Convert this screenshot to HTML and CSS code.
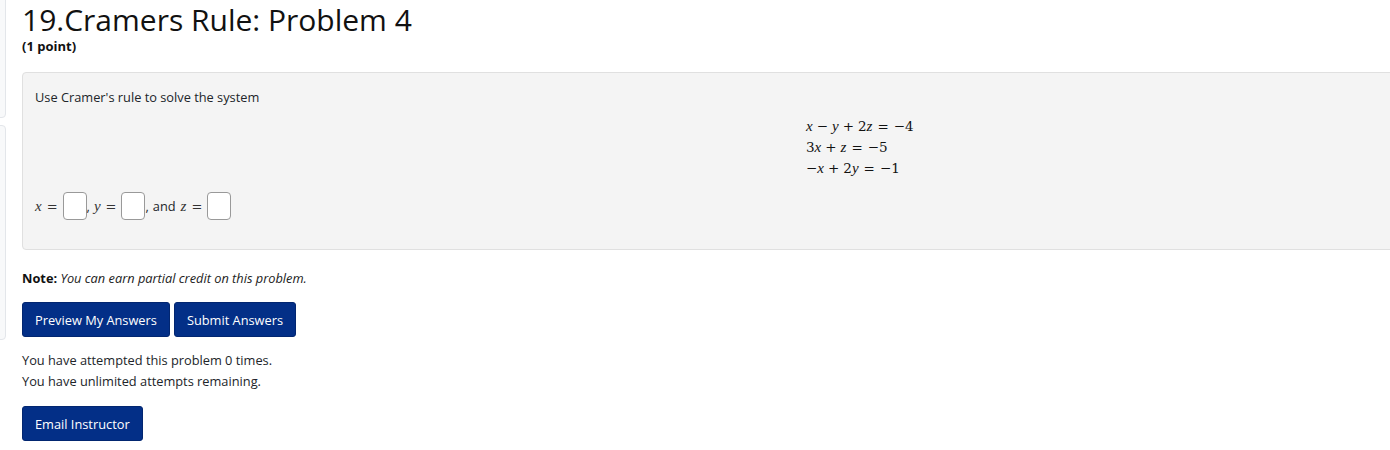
FILE: index.html
```html
<!DOCTYPE html>
<html lang="en">
<head>
<meta charset="utf-8">
<title>Cramers Rule: Problem 4</title>
<link rel="stylesheet" href="styles.css">
</head>
<body>
<div class="page">
  <aside class="side">
    <div class="side-card side-top"></div>
    <div class="side-card side-bottom"></div>
  </aside>
  <main class="main">
    <h1 class="title">19.Cramers Rule: Problem 4</h1>
    <div class="points">(1 point)</div>
    <div class="problem">
      <p class="intro">Use Cramer's rule to solve the system</p>
      <div class="system">
        <div class="eq"><i>x</i><span class="op">&minus;</span><i>y</i><span class="op">+</span>2<i>z</i><span class="rel">=</span>&minus;4</div>
        <div class="eq">3<i>x</i><span class="op">+</span><i>z</i><span class="rel">=</span>&minus;5</div>
        <div class="eq">&minus;<i>x</i><span class="op">+</span>2<i>y</i><span class="rel">=</span>&minus;1</div>
      </div>
      <div class="answers">
        <span class="m"><i>x</i><span class="rel">=</span></span><input class="ans" type="text" aria-label="x"><span class="sep">,</span>
        <span class="m"><i>y</i><span class="rel">=</span></span><input class="ans" type="text" aria-label="y"><span class="sep">,</span>
        <span class="word">and</span>
        <span class="m"><i>z</i><span class="rel">=</span></span><input class="ans" type="text" aria-label="z">
      </div>
    </div>
    <p class="note"><b>Note:</b> <em>You can earn partial credit on this problem.</em></p>
    <div class="btn-row">
      <button class="btn">Preview My Answers</button>
      <button class="btn">Submit Answers</button>
    </div>
    <p class="attempts">You have attempted this problem 0 times.<br>You have unlimited attempts remaining.</p>
    <button class="btn">Email Instructor</button>
  </main>
</div>
</body>
</html>
```

FILE: styles.css
```css
* { box-sizing: border-box; }
html, body { margin: 0; padding: 0; background: #fff; }
body {
  font-family: "Open Sans", "Noto Sans", "Liberation Sans", sans-serif;
  color: #212529;
  font-size: 12.8px;
  overflow: hidden;
}
.page {
  display: flex;
  width: 1390px;
  height: 450px;
}
.side {
  width: 22px;
  flex: none;
  display: flex;
  flex-direction: column;
  gap: 7px;
  margin-left: -16px;
}
.side-card {
  width: 22px;
  background: #f8f9fa;
  border: 1px solid #e3e6ea;
  border-radius: 4px;
}
.side-top { height: 124px; margin-top: -6px; }
.side-bottom { height: 215px; }
.main {
  flex: 1;
  padding-left: 16px;
  min-width: 0;
}
.title {
  margin: 3px 0 0;
  font-size: 30px;
  font-weight: 500;
  line-height: 34px;
  color: #111;
}
.points {
  font-size: 13px;
  font-weight: 700;
  line-height: 14px;
  margin-top: 2px;
  color: #111;
}
.problem {
  margin-top: 19px;
  width: 1400px;
  height: 178px;
  background: #f4f4f4;
  border: 1px solid #e0e0e0;
  border-radius: 4px;
  padding: 15px 12px 0;
}
.intro {
  margin: 0;
  line-height: 18px;
}
.system {
  margin: 10px 0 0 771px;
  font-family: "DejaVu Serif", "Liberation Serif", serif;
  font-size: 13.5px;
  line-height: 21px;
  color: #111;
}
.system i, .answers i {
  font-family: "Liberation Serif", serif;
  font-size: 15px;
}
.op { margin: 0 4px; }
.rel { margin: 0 5px; }
.answers {
  margin-top: 13px;
  display: flex;
  align-items: center;
}
.m {
  font-family: "DejaVu Serif", "Liberation Serif", serif;
  font-size: 13px;
  color: #333;
}
.ans {
  width: 24px;
  height: 28px;
  border: 1px solid #999;
  border-radius: 4px;
  background: #fff;
  padding: 0;
  margin: 0;
}
.sep { margin-right: 4px; }
.word { margin-right: 5px; }
.note {
  margin: 19px 0 0;
  line-height: 18px;
  color: #111;
}
.note em { color: #222; }
.btn-row {
  display: flex;
  gap: 4px;
  margin-top: 15px;
}
.btn {
  font-family: inherit;
  font-size: 12.8px;
  color: #fff;
  background: #032f87;
  border: 1px solid #022670;
  border-radius: 3px;
  height: 35px;
  padding: 0 12px;
  cursor: pointer;
}
.attempts {
  margin: 13px 0 14px;
  line-height: 21px;
}
```
